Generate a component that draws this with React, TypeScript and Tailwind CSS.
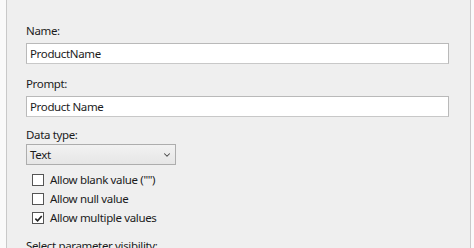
import { ChevronDown } from 'lucide-react';

const checks = [
    { label: 'Allow blank value ("")', checked: false },
    { label: 'Allow null value', checked: false },
    { label: 'Allow multiple values', checked: true },
];

function Field({ label, value }: { label: string; value: string }) {
    return (
        <div className="flex flex-col">
            <div className="h-[16px] leading-[16px]">{label}</div>
            <div className="mt-[4px] h-[21px] w-[423px] border border-[#b9b9b9] border-b-[#c8c8c8] bg-white pl-[3px] leading-[19px]">
                {value}
            </div>
        </div>
    );
}

export default function App() {
    return (
        <div
            className="w-[474px] h-[248px] overflow-hidden bg-white flex text-[11.5px] tracking-[-0.35px] text-[#1b1b1b]"
            style={{ fontFamily: '"Noto Sans", "Open Sans", sans-serif' }}
        >
            <div className="w-[6px] bg-[#fafafa]" />
            <div className="flex-1 flex flex-col border-l border-r border-[#c9c9c9] bg-[#efefef]">
                <div className="h-[4px] bg-[#f6f6f6]" />
                <div className="flex flex-col pl-[19px] pt-[23px]">
                    <Field label="Name:" value="ProductName" />
                    <div className="mt-[12px]">
                        <Field label="Prompt:" value="Product Name" />
                    </div>
                    <div className="mt-[10px] h-[16px] leading-[16px]">Data type:</div>
                    <div className="mt-[1px] h-[21px] w-[150px] flex items-center justify-between border border-[#adadad] bg-gradient-to-b from-[#f2f2f2] to-[#e6e6e6] pl-[3px] pr-[3px]">
                        <span className="leading-[19px]">Text</span>
                        <ChevronDown className="w-[10px] h-[10px] text-[#444]" strokeWidth={2.5} />
                    </div>
                    <div className="mt-[9px] flex flex-col gap-[7px] pl-[6px]">
                        {checks.map((c) => (
                            <div key={c.label} className="flex items-center h-[12px]">
                                <div className="w-[12px] h-[12px] border border-[#555] bg-white flex items-center justify-center">
                                    {c.checked && (
                                        <svg viewBox="0 0 10 10" className="w-[9px] h-[9px]">
                                            <path d="M1.5 5.2 L4 7.6 L8.6 2.2" fill="none" stroke="#222" strokeWidth="1.8" />
                                        </svg>
                                    )}
                                </div>
                                <span className="ml-[6px] leading-[16px]">{c.label}</span>
                            </div>
                        ))}
                    </div>
                    <div className="mt-[14px] leading-[16px]">Select parameter visibility:</div>
                </div>
            </div>
            <div className="w-[3px] bg-[#fafafa]" />
        </div>
    );
}
